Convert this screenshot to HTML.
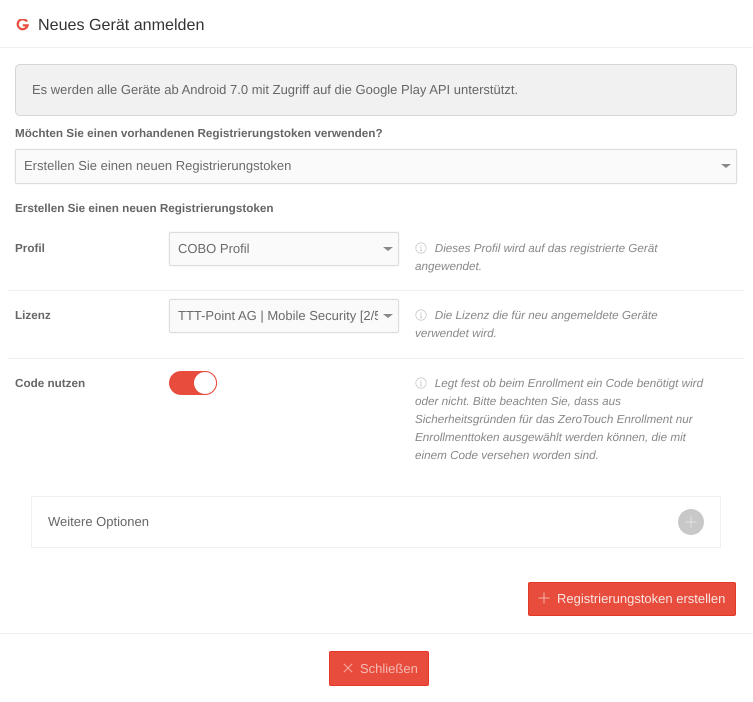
<!DOCTYPE html>
<html lang="de">
<head>
<meta charset="utf-8">
<title>Neues Gerät anmelden</title>
<style>
html,body{margin:0;padding:0;background:#fff;}
body{width:753px;height:702px;position:relative;overflow:hidden;font-family:"Liberation Sans",sans-serif;color:#666;text-rendering:geometricPrecision;}
.a{position:absolute;white-space:nowrap;}
.line{position:absolute;height:1px;background:#f0f0f0;}
.lbl{position:absolute;white-space:nowrap;font-weight:bold;font-size:11.7px;line-height:16px;color:#666;}
.sel{position:absolute;box-sizing:border-box;background:#fafafa;border:1px solid #ddd;border-radius:2px;box-shadow:0 0 1px rgba(0,0,0,.15);font-size:13px;line-height:32px;color:#6b6b6b;padding-left:8px;overflow:hidden;white-space:nowrap;}
.caret{position:absolute;width:0;height:0;border-left:5px solid transparent;border-right:5px solid transparent;border-top:4.5px solid #888;}
.help{position:absolute;left:415px;width:300px;font-size:11.7px;line-height:18px;font-style:italic;color:#888;}
.help svg{vertical-align:-2px;margin-right:4.5px;}
.btn{position:absolute;box-sizing:border-box;background:#e74c3c;border:1px solid #e43725;border-radius:2px;font-size:13px;white-space:nowrap;}
</style>
</head>
<body>
<svg class="a" style="left:16px;top:19px" width="13" height="14" viewBox="0 0 13 14"><path d="M11 2.6A5 5 0 1 0 11.6 6.4H6.8" fill="none" stroke="#e74c3c" stroke-width="2.2"/></svg>
<div class="a" style="left:38px;top:15px;font-size:16.1px;line-height:20px;color:#333">Neues Gerät anmelden</div>
<div class="line" style="left:0;top:47px;width:753px"></div>

<div class="a" style="left:15px;top:64px;width:722px;height:52px;box-sizing:border-box;background:#f1f1f1;border:1px solid #d5d5d5;border-radius:5px"></div>
<div class="a" style="left:32px;top:81px;font-size:13px;line-height:18px;color:#666">Es werden alle Geräte ab Android 7.0 mit Zugriff auf die Google Play API unterstützt.</div>

<div class="lbl" style="left:15px;top:126px">Möchten Sie einen vorhandenen Registrierungstoken verwenden?</div>
<div class="sel" style="left:15px;top:149px;width:722px;height:35px">Erstellen Sie einen neuen Registrierungstoken</div>
<div class="caret" style="left:721px;top:164px"></div>

<div class="lbl" style="left:15px;top:201px">Erstellen Sie einen neuen Registrierungstoken</div>

<div class="lbl" style="left:15px;top:241px">Profil</div>
<div class="sel" style="left:169px;top:232px;width:230px;height:34px">COBO Profil</div>
<div class="caret" style="left:383px;top:247px"></div>
<div class="help" style="top:240px"><svg width="12" height="12" viewBox="0 0 12 12"><circle cx="6" cy="6" r="5.2" fill="none" stroke="#ccc" stroke-width=".8"/><path d="M6 5v3.6M5 8.8h2M5.2 5h.8M6 3v.9" fill="none" stroke="#bbb" stroke-width=".7"/></svg> Dieses Profil wird auf das registrierte Gerät<br>angewendet.</div>

<div class="line" style="left:8px;top:290px;width:736px"></div>

<div class="lbl" style="left:15px;top:308px">Lizenz</div>
<div class="sel" style="left:169px;top:299px;width:230px;height:34px"><span style="display:block;width:200px;overflow:hidden">TTT-Point AG | Mobile Security [2/500]</span></div>
<div class="caret" style="left:383px;top:314px"></div>
<div class="help" style="top:307px"><svg width="12" height="12" viewBox="0 0 12 12"><circle cx="6" cy="6" r="5.2" fill="none" stroke="#ccc" stroke-width=".8"/><path d="M6 5v3.6M5 8.8h2M5.2 5h.8M6 3v.9" fill="none" stroke="#bbb" stroke-width=".7"/></svg> Die Lizenz die für neu angemeldete Geräte<br>verwendet wird.</div>

<div class="line" style="left:8px;top:358px;width:736px"></div>

<div class="lbl" style="left:15px;top:376px">Code nutzen</div>
<div class="a" style="left:169px;top:371px;width:48px;height:24px;background:#e74c3c;border-radius:12px"></div>
<div class="a" style="left:193px;top:371px;width:24px;height:24px;box-sizing:border-box;background:#fff;border:1px solid #e74c3c;border-radius:50%"></div>
<div class="help" style="top:375px"><svg width="12" height="12" viewBox="0 0 12 12"><circle cx="6" cy="6" r="5.2" fill="none" stroke="#ccc" stroke-width=".8"/><path d="M6 5v3.6M5 8.8h2M5.2 5h.8M6 3v.9" fill="none" stroke="#bbb" stroke-width=".7"/></svg> Legt fest ob beim Enrollment ein Code benötigt wird<br>oder nicht. Bitte beachten Sie, dass aus<br>Sicherheitsgründen für das ZeroTouch Enrollment nur<br>Enrollmenttoken ausgewählt werden können, die mit<br>einem Code versehen worden sind.</div>

<div class="a" style="left:31px;top:496px;width:690px;height:52px;box-sizing:border-box;border:1px solid #f0f0f0"></div>
<div class="a" style="left:48px;top:513px;font-size:13px;line-height:18px;color:#666">Weitere Optionen</div>
<div class="a" style="left:678px;top:509px;width:26px;height:26px;border-radius:50%;background:#c8c8c8"></div>
<svg class="a" style="left:678px;top:509px" width="26" height="26" viewBox="0 0 26 26"><path d="M13 7.5v11M7.5 13h11" stroke="#e4e4e4" stroke-width="1"/></svg>

<div class="btn" style="left:528px;top:582px;width:208px;height:34px"></div>
<svg class="a" style="left:538px;top:592px" width="12" height="12" viewBox="0 0 12 12"><path d="M6 .5v11M.5 6h11" stroke="#f3b3ab" stroke-width="1"/></svg>
<div class="a" style="left:557px;top:590px;font-size:13px;line-height:18px;color:#fbe4e1">Registrierungstoken erstellen</div>

<div class="line" style="left:0;top:633px;width:753px"></div>

<div class="btn" style="left:329px;top:651px;width:100px;height:35px"></div>
<svg class="a" style="left:343px;top:663px" width="10" height="10" viewBox="0 0 10 10"><path d="M.8.8l8.4 8.4M9.2.8L.8 9.2" stroke="#f3b3ab" stroke-width="1"/></svg>
<div class="a" style="left:360px;top:660px;font-size:13px;line-height:18px;color:#f5b9b2">Schließen</div>
</body>
</html>
